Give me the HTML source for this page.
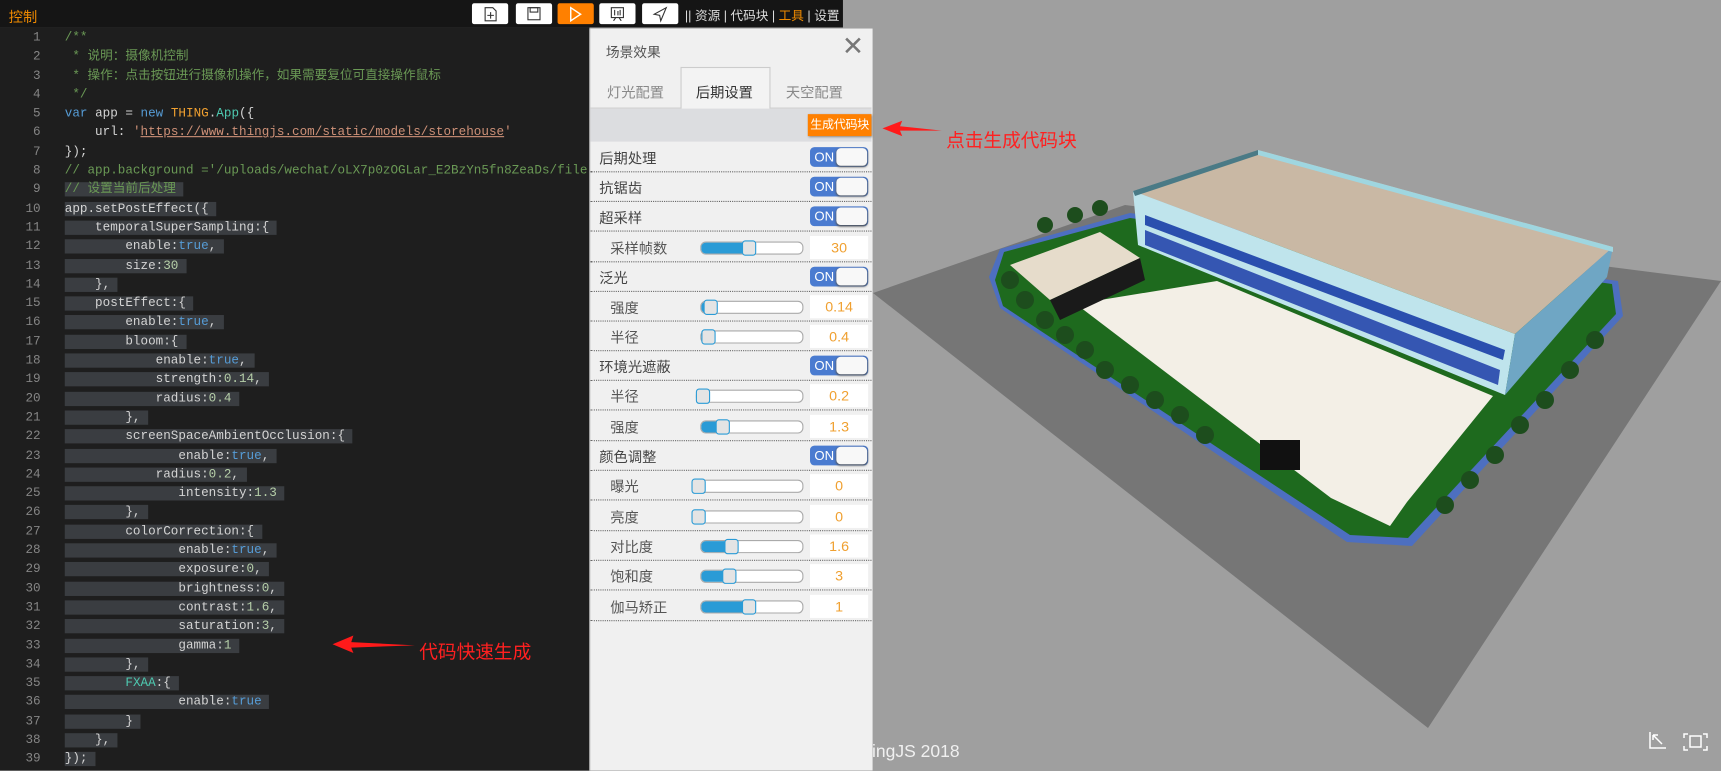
<!DOCTYPE html>
<html><head><meta charset="utf-8"><style>
*{margin:0;padding:0;box-sizing:border-box}
body{width:1721px;height:771px;overflow:hidden;background:#9d9d9d;font-family:"Liberation Sans","Noto Sans CJK SC",sans-serif;position:relative}
#w{position:absolute;left:0;top:0;width:1568px;height:702px;transform:scale(1.09758);transform-origin:0 0}
.abs{position:absolute}
#top{left:0;top:0;width:768px;height:25px;background:#151515}
.btn{position:absolute;top:3px;width:33px;height:19px;background:#fff;border-radius:2px}
#code{left:0;top:25px;width:537px;height:677px;background:#1e1e1e;overflow:hidden}
.ln{position:absolute;left:0;width:37px;text-align:right;color:#858585;font:11.5px/17.3px "Liberation Mono",monospace}
.cl{position:absolute;left:59px;white-space:pre;color:#d4d4d4;font:11.5px/17.3px "Liberation Mono","Noto Sans CJK SC",monospace}
.sel{background:#3a3d41;padding-right:7px}
.c{color:#6a9955}.k{color:#569cd6}.o{color:#f0a030}.t{color:#4ec9b0}.s{color:#ce9178}.n{color:#b5cea8}
#panel{left:537px;top:26px;width:258px;height:676px;background:#f0f0f0;border-left:1px solid #ccc}
.row{position:absolute;left:0;width:256px;height:27px;border-bottom:1px dotted #666;font-size:13px;color:#444}
.row .lb{position:absolute;left:8px;top:4px}
.row .lb2{position:absolute;left:18px;top:4px;color:#555}
.tog{position:absolute;left:200px;top:4px;width:53px;height:18px;background:#4a7bd0;border-radius:4px;color:#fff;font-size:12px;line-height:18px;padding-left:4px}
.tog i{position:absolute;right:1px;top:1px;width:28px;height:16px;background:#f8f8f8;border-radius:4px;box-shadow:0 1px 2px #555}
.trk{position:absolute;top:8px;height:12px;background:#fff;border:1px solid #aaa;border-radius:5px;overflow:visible}
.fill{position:absolute;left:0;top:0;height:10px;background:#2a9bd6;border-radius:4px 0 0 4px}
.knob{position:absolute;top:-2px;width:13px;height:14px;background:#e4e4e4;border:1px solid #2a9bd6;border-radius:3px}
.val{position:absolute;left:200px;top:3px;width:53px;height:21px;background:#fff;color:#f0a030;text-align:center;font-size:13px;line-height:21px}
</style></head><body>
<svg class="abs" style="left:0;top:0" width="1721" height="771">
<rect x="0" y="0" width="1721" height="771" fill="#9f9f9f"/>
<polygon points="873,293 1125,205 1721,281 1428,728" fill="#767676"/>
<polygon points="989,277 1000,249 1130,213 1618,281 1623,316 1412,546 1347,542 1000,308" fill="#4d6fc0"/>
<polygon points="995,280 1004,252 1130,218 1612,284 1616,314 1408,538 1350,535 1003,306" fill="#1e6a1e"/>
<polygon points="1076,304 1217,281 1493,396 1407,502 1390,526 1331,498" fill="#f3efe6"/>
<polygon points="1010,265 1100,232 1140,258 1050,300" fill="#e6dccb"/>
<polygon points="1050,300 1140,258 1145,280 1060,320" fill="#1a1a1a"/>
<g fill="#1d4d1d">
<circle cx="1010" cy="280" r="9"/><circle cx="1025" cy="300" r="9"/><circle cx="1045" cy="320" r="9"/><circle cx="1065" cy="335" r="9"/><circle cx="1085" cy="350" r="9"/><circle cx="1105" cy="370" r="9"/><circle cx="1130" cy="385" r="9"/><circle cx="1155" cy="400" r="9"/><circle cx="1180" cy="415" r="9"/><circle cx="1205" cy="435" r="9"/>
<circle cx="1595" cy="340" r="9"/><circle cx="1570" cy="370" r="9"/><circle cx="1545" cy="400" r="9"/><circle cx="1520" cy="425" r="9"/><circle cx="1495" cy="455" r="9"/><circle cx="1470" cy="480" r="9"/><circle cx="1445" cy="505" r="9"/>
<circle cx="1045" cy="225" r="8"/><circle cx="1075" cy="215" r="8"/><circle cx="1100" cy="208" r="8"/>
</g>
<polygon points="1133,191 1258,150 1613,247 1515,334" fill="#c9b8a4"/>
<polygon points="1133,191 1515,334 1505,395 1138,245" fill="#bfe4ec"/>
<polygon points="1145,215 1505,350 1503,360 1145,225" fill="#2a4fae"/>
<polygon points="1145,230 1500,370 1498,385 1145,245" fill="#3556b2"/>
<polygon points="1515,334 1613,247 1607,277 1505,395" fill="#6fa6c4"/>
<polygon points="1258,150 1613,247 1613,252 1258,155" fill="#9fd6e0"/>
<polygon points="1133,191 1258,150 1258,155 1135,196" fill="#4a7a86"/>
<rect x="1260" y="440" width="40" height="30" fill="#111"/>
<text x="872" y="757" fill="#f0f0f0" font-family="Liberation Sans" font-size="17.5">ingJS 2018</text>
<g stroke="#fff" stroke-width="1.5" fill="none">
<path d="M1650 732v16h16M1653 735l9 9M1653 735h5M1653 735v5"/>
<path d="M1688 734h-4v4M1703 734h4v4M1688 750h-4v-4M1703 750h4v-4"/><rect x="1690" y="736" width="11" height="11"/>
</g>
</svg>
<div id="w">
<div id="top" class="abs">
<span class="abs" style="left:8px;top:5px;color:#f08a00;font-size:13px">控制</span>
<div class="btn" style="left:430px"><svg width="33" height="19"><path d="M12 4h7l3 3v9H12z" fill="none" stroke="#333"/><path d="M17 8v6M14 11h6" stroke="#333"/></svg></div>
<div class="btn" style="left:470px"><svg width="33" height="19"><rect x="11" y="4" width="11" height="11" fill="none" stroke="#333"/><rect x="13" y="4" width="7" height="4" fill="none" stroke="#333"/></svg></div>
<div class="btn" style="left:508px;background:#ff8000"><svg width="33" height="19"><path d="M12 4l9 6-9 6z" fill="none" stroke="#fff" stroke-width="1.3"/></svg></div>
<div class="btn" style="left:546px"><svg width="33" height="19"><rect x="11" y="4" width="11" height="9" fill="none" stroke="#333"/><path d="M14 6v5M17 7v4M19 6v5M13 16l2-3M20 16l-2-3" stroke="#333"/></svg></div>
<div class="btn" style="left:585px"><svg width="33" height="19"><path d="M22 4L11 10l5 1 1 5z" fill="none" stroke="#333"/></svg></div>
<span class="abs" style="left:624px;top:6px;color:#ddd;font-size:11.5px;white-space:nowrap">|| 资源 | 代码块 | <span style="color:#f08a00">工具</span> | 设置</span>
</div>
<div id="code" class="abs">
<div style="position:absolute;left:0;top:1px">
<div class="ln" style="top:0">1<br>2<br>3<br>4<br>5<br>6<br>7<br>8<br>9<br>10<br>11<br>12<br>13<br>14<br>15<br>16<br>17<br>18<br>19<br>20<br>21<br>22<br>23<br>24<br>25<br>26<br>27<br>28<br>29<br>30<br>31<br>32<br>33<br>34<br>35<br>36<br>37<br>38<br>39</div>
<div class="cl" style="top:0"><span class="c">/**
 * 说明：摄像机控制
 * 操作：点击按钮进行摄像机操作，如果需要复位可直接操作鼠标
 */</span>
<span class="k">var</span> app = <span class="k">new</span> <span class="o">THING</span>.<span class="t">App</span>({
    url: <span class="s">'<u>https://www.thingjs.com/static/models/storehouse</u>'</span>
});
<span class="c">// app.background ='/uploads/wechat/oLX7p0zOGLar_E2BzYn5fn8ZeaDs/file</span>
<span class="sel"><span class="c">// 设置当前后处理</span></span>
<span class="sel">app.setPostEffect({</span>
<span class="sel">    temporalSuperSampling:{</span>
<span class="sel">        enable:<span class="k">true</span>,</span>
<span class="sel">        size:<span class="n">30</span></span>
<span class="sel">    },</span>
<span class="sel">    postEffect:{</span>
<span class="sel">        enable:<span class="k">true</span>,</span>
<span class="sel">        bloom:{</span>
<span class="sel">            enable:<span class="k">true</span>,</span>
<span class="sel">            strength:<span class="n">0.14</span>,</span>
<span class="sel">            radius:<span class="n">0.4</span></span>
<span class="sel">        },</span>
<span class="sel">        screenSpaceAmbientOcclusion:{</span>
<span class="sel">               enable:<span class="k">true</span>,</span>
<span class="sel">            radius:<span class="n">0.2</span>,</span>
<span class="sel">               intensity:<span class="n">1.3</span></span>
<span class="sel">        },</span>
<span class="sel">        colorCorrection:{</span>
<span class="sel">               enable:<span class="k">true</span>,</span>
<span class="sel">               exposure:<span class="n">0</span>,</span>
<span class="sel">               brightness:<span class="n">0</span>,</span>
<span class="sel">               contrast:<span class="n">1.6</span>,</span>
<span class="sel">               saturation:<span class="n">3</span>,</span>
<span class="sel">               gamma:<span class="n">1</span></span>
<span class="sel">        },</span>
<span class="sel">        <span class="t">FXAA</span>:{</span>
<span class="sel">               enable:<span class="k">true</span></span>
<span class="sel">        }</span>
<span class="sel">    },</span>
<span class="sel">});</span></div>
</div>
<svg class="abs" style="left:300px;top:550px" width="237" height="40"><polygon points="3,12 22,4 20,10 78,13 20,15 22,20" fill="#ff1a1a"/></svg>
<span class="abs" style="left:382px;top:555px;color:#ff2020;font-size:17px">代码快速生成</span>
</div>
<div id="panel" class="abs">
<span class="abs" style="left:14px;top:11px;font-size:12.5px;color:#555">场景效果</span>
<span class="abs" style="left:229px;top:2px;font-size:24px;color:#777">✕</span>
<div class="abs" style="left:0;top:72px;width:256px;height:1px;background:#ccc"></div>
<span class="abs" style="left:15px;top:48px;font-size:13px;color:#888">灯光配置</span>
<div class="abs" style="left:82px;top:35px;width:82px;height:38px;border:1px solid #ccc;border-bottom:none;background:#f3f3f3"></div>
<span class="abs" style="left:96px;top:48px;font-size:13px;color:#333">后期设置</span>
<span class="abs" style="left:178px;top:48px;font-size:13px;color:#888">天空配置</span>
<div class="abs" style="left:0;top:73px;width:256px;height:30px;background:#dcdde0"></div>
<div class="abs" style="left:198px;top:78px;width:58px;height:20px;background:#ff8000;color:#fff;font-size:11px;line-height:20px;text-align:center;white-space:nowrap;letter-spacing:-0.3px;box-shadow:1px 1px 2px #888">生成代码块</div>
<div class="row" style="top:104px"><span class="lb">后期处理</span><div class="tog">ON<i></i></div></div>
<div class="row" style="top:131px"><span class="lb">抗锯齿</span><div class="tog">ON<i></i></div></div>
<div class="row" style="top:158px"><span class="lb">超采样</span><div class="tog">ON<i></i></div></div>
<div class="row" style="top:186px"><span class="lb2">采样帧数</span><div class="trk" style="left:100px;width:94px"><div class="fill" style="width:44px"></div><div class="knob" style="left:37px"></div></div><div class="val">30</div></div>
<div class="row" style="top:213px"><span class="lb">泛光</span><div class="tog">ON<i></i></div></div>
<div class="row" style="top:240px"><span class="lb2">强度</span><div class="trk" style="left:100px;width:94px"><div class="fill" style="width:10px"></div><div class="knob" style="left:2px"></div></div><div class="val">0.14</div></div>
<div class="row" style="top:267px"><span class="lb2">半径</span><div class="trk" style="left:100px;width:94px"><div class="knob" style="left:0px"></div></div><div class="val">0.4</div></div>
<div class="row" style="top:294px"><span class="lb">环境光遮蔽</span><div class="tog">ON<i></i></div></div>
<div class="row" style="top:321px"><span class="lb2">半径</span><div class="trk" style="left:96px;width:98px"><div class="knob" style="left:-1px"></div></div><div class="val">0.2</div></div>
<div class="row" style="top:349px"><span class="lb2">强度</span><div class="trk" style="left:100px;width:94px"><div class="fill" style="width:20px"></div><div class="knob" style="left:13px"></div></div><div class="val">1.3</div></div>
<div class="row" style="top:376px"><span class="lb">颜色调整</span><div class="tog">ON<i></i></div></div>
<div class="row" style="top:403px"><span class="lb2">曝光</span><div class="trk" style="left:92px;width:102px"><div class="knob" style="left:-1px"></div></div><div class="val">0</div></div>
<div class="row" style="top:431px"><span class="lb2">亮度</span><div class="trk" style="left:92px;width:102px"><div class="knob" style="left:-1px"></div></div><div class="val">0</div></div>
<div class="row" style="top:458px"><span class="lb2">对比度</span><div class="trk" style="left:100px;width:94px"><div class="fill" style="width:28px"></div><div class="knob" style="left:21px"></div></div><div class="val">1.6</div></div>
<div class="row" style="top:485px"><span class="lb2">饱和度</span><div class="trk" style="left:100px;width:94px"><div class="fill" style="width:26px"></div><div class="knob" style="left:19px"></div></div><div class="val">3</div></div>
<div class="row" style="top:513px"><span class="lb2">伽马矫正</span><div class="trk" style="left:100px;width:94px"><div class="fill" style="width:44px"></div><div class="knob" style="left:37px"></div></div><div class="val">1</div></div>
</div>
<svg class="abs" style="left:800px;top:105px" width="70" height="25"><polygon points="4,12 22,5 20,10 58,14 20,14 22,19" fill="#ff1a1a"/></svg>
<span class="abs" style="left:862px;top:114px;color:#ff2020;font-size:17px">点击生成代码块</span>
</div>
</body></html>
